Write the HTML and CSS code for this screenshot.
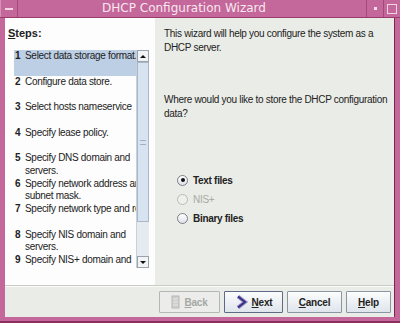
FILE: index.html
```html
<!DOCTYPE html>
<html lang="en">
<head>
    <meta charset="UTF-8">
    <title>DHCP Configuration Wizard</title>
    <link rel="stylesheet" href="styles.css">
</head>
<body>
    <div class="window">
        <div class="titlebar">
            <div class="tb-box tb-menu"><span class="dash"></span></div>
            <div class="tb-title">DHCP Configuration Wizard</div>
            <div class="tb-box tb-small"><span class="dot"></span></div>
            <div class="tb-box tb-max"><span class="square"></span></div>
        </div>

        <div class="frame">
            <div class="content">
                <div class="steps">
                    <div class="steps-label"><u>S</u>teps:</div>
                    <div class="steps-list">
                        <ul class="list">
                            <li class="selected"><b>1</b><span>Select data storage format.</span></li>
                            <li><b>2</b><span>Configure data store.</span></li>
                            <li><b>3</b><span>Select hosts nameservice</span></li>
                            <li><b>4</b><span>Specify lease policy.</span></li>
                            <li><b>5</b><span>Specify DNS domain and<br>servers.</span></li>
                            <li><b>6</b><span>Specify network address and<br>subnet mask.</span></li>
                            <li><b>7</b><span>Specify network type and routing.</span></li>
                            <li><b>8</b><span>Specify NIS domain and<br>servers.</span></li>
                            <li><b>9</b><span>Specify NIS+ domain and<br>servers.</span></li>
                        </ul>
                        <div class="scrollbar">
                            <div class="sb-btn"><span class="arrow-up"></span></div>
                            <div class="sb-track">
                                <div class="sb-thumb"><span class="grip"></span></div>
                            </div>
                            <div class="sb-btn"><span class="arrow-down"></span></div>
                        </div>
                    </div>
                </div>

                <div class="main">
                    <p class="intro">This wizard will help you configure the system as a DHCP server.</p>
                    <p class="question">Where would you like to store the DHCP configuration data?</p>
                    <div class="options">
                        <label class="option"><span class="radio checked"></span>Text files</label>
                        <label class="option disabled"><span class="radio"></span>NIS+</label>
                        <label class="option"><span class="radio"></span>Binary files</label>
                    </div>
                </div>
            </div>

            <div class="footer">
                <button class="btn disabled">
                    <svg width="10" height="14" viewBox="0 0 10 14"><rect x="1" y="1" width="7" height="12" fill="#cfcfcf" stroke="#b8b8b8"/><path d="M2 4h5M2 7h5M2 10h5" stroke="#e4e4e4"/></svg>
                    <span><u>B</u>ack</span>
                </button>
                <button class="btn default">
                    <svg width="14" height="14" viewBox="0 0 14 14"><path d="M3 1.5 L10 7 L3 12.5" fill="none" stroke="#9a94c8" stroke-width="4"/><path d="M3 1.5 L10 7 L3 12.5" fill="none" stroke="#3a2f80" stroke-width="2"/></svg>
                    <span><u>N</u>ext</span>
                </button>
                <button class="btn"><span><u>C</u>ancel</span></button>
                <button class="btn"><span><u>H</u>elp</span></button>
            </div>
        </div>
    </div>
</body>
</html>
```

FILE: styles.css
```css
body {
    margin: 0;
    width: 400px;
    height: 323px;
    overflow: hidden;
    font-family: 'Liberation Sans', Arial, sans-serif;
    font-size: 10px;
    letter-spacing: -0.3px;
    color: #222;
}

.window {
    height: 323px;
    background-color: #c4679a;
    display: flex;
    flex-direction: column;
    box-sizing: border-box;
    border-bottom: 2px solid #8e2e5e;
}

/* title bar */
.titlebar {
    height: 18px;
    display: flex;
    align-items: stretch;
    border-bottom: 1px solid #9a3c6a;
    box-sizing: border-box;
}

.tb-box {
    width: 16px;
    display: flex;
    align-items: center;
    justify-content: center;
    border-right: 1px solid #a24a76;
    border-left: 1px solid #d890b6;
}

.tb-small,
.tb-max {
    border-right: none;
    border-left: 1px solid #a24a76;
}

.dash {
    width: 8px;
    height: 2px;
    background-color: #f0d4e2;
}

.dot {
    width: 3px;
    height: 3px;
    background-color: #f4dde9;
}

.square {
    width: 8px;
    height: 8px;
    border: 1px solid #f0d4e2;
}

.tb-title {
    flex: 1;
    text-align: center;
    color: #f8e8f0;
    font-family: 'DejaVu Sans', sans-serif;
    font-size: 12px;
    letter-spacing: 0;
    line-height: 17px;
    padding-right: 16px;
}

/* window body */
.frame {
    flex: 1;
    margin: 0 5px 4px 5px;
    background-color: #eaece7;
    display: flex;
    flex-direction: column;
    border-right: 1px solid #7a2850;
}

.content {
    height: 267px;
    display: flex;
    border-bottom: 1px solid #c9cbc6;
}

.steps {
    width: 150px;
    background-color: #fdfdfd;
    display: flex;
    flex-direction: column;
}

.steps-label {
    font-weight: bold;
    font-size: 11px;
    letter-spacing: 0;
    padding: 9px 0 0 3px;
    height: 32px;
    box-sizing: border-box;
}

.steps-list {
    display: flex;
    height: 218px;
    margin-left: 9px;
    overflow: hidden;
}

.list {
    list-style: none;
    margin: 0;
    padding: 0;
    width: 122px;
    overflow: hidden;
}

.list li {
    height: 25.5px;
    line-height: 12.75px;
    display: flex;
    padding-left: 1px;
    overflow: hidden;
}

.list li b {
    width: 10px;
    flex-shrink: 0;
}

.list li span {
    white-space: nowrap;
}

.list li.selected {
    background-color: #bccfe5;
}

/* scrollbar */
.scrollbar {
    width: 12px;
    display: flex;
    flex-direction: column;
    background-color: #e6ebf1;
    border-left: 1px solid #c8d0da;
}

.sb-btn {
    height: 12px;
    display: flex;
    align-items: center;
    justify-content: center;
    background-color: #f2f3f4;
    border: 1px solid #9aa3ad;
    box-sizing: border-box;
}

.arrow-up {
    border-left: 3px solid transparent;
    border-right: 3px solid transparent;
    border-bottom: 3px solid #111;
}

.arrow-down {
    border-left: 3px solid transparent;
    border-right: 3px solid transparent;
    border-top: 3px solid #111;
}

.sb-track {
    flex: 1;
}

.sb-thumb {
    height: 160px;
    background-color: #d7e3f0;
    border: 1px solid #a9b7c8;
    box-sizing: border-box;
    display: flex;
    align-items: center;
    justify-content: center;
}

.grip {
    width: 6px;
    height: 3px;
    border-top: 1px solid #9cb0c8;
    border-bottom: 1px solid #9cb0c8;
}

/* main area */
.main {
    flex: 1;
    padding: 9px 2px 0 9px;
}

.main p {
    margin: 0;
    line-height: 14px;
}

.question {
    margin-top: 38px !important;
}

.options {
    display: flex;
    flex-direction: column;
    gap: 5px;
    margin: 52px 0 0 13px;
}

.option {
    display: flex;
    align-items: center;
    gap: 5px;
    font-weight: bold;
    height: 14px;
}

.option.disabled {
    color: #a8aaa6;
    font-weight: normal;
}

.radio {
    width: 9px;
    height: 9px;
    border-radius: 50%;
    border: 1px solid #7a7f86;
    background: linear-gradient(#ffffff, #dde2ea);
    display: flex;
    align-items: center;
    justify-content: center;
}

.radio.checked::after {
    content: "";
    width: 4px;
    height: 4px;
    border-radius: 50%;
    background-color: #111;
}

.option.disabled .radio {
    border-color: #b9bbb8;
    background: #eef0ec;
}

/* footer buttons */
.footer {
    flex: 1;
    display: flex;
    justify-content: flex-end;
    align-items: center;
    gap: 4px;
    padding-right: 3px;
    border-top: 1px solid #fafbf9;
}

.btn {
    height: 22px;
    font-family: 'Liberation Sans', Arial, sans-serif;
    font-size: 10px;
    font-weight: bold;
    letter-spacing: -0.2px;
    color: #222;
    background: linear-gradient(#fbfcfd, #dfe5ec);
    border: 1px solid #8c96a2;
    border-radius: 1px;
    display: flex;
    align-items: center;
    justify-content: center;
    gap: 3px;
    padding: 0;
    width: 55px;
}

.btn.disabled {
    width: 61px;
    color: #a4a8a4;
    background: #ecedea;
    border-color: #b4b8b4;
}

.btn.default {
    width: 59px;
    border: 1px solid #5e6a84;
}

.btn:last-child {
    width: 45px;
}
```
